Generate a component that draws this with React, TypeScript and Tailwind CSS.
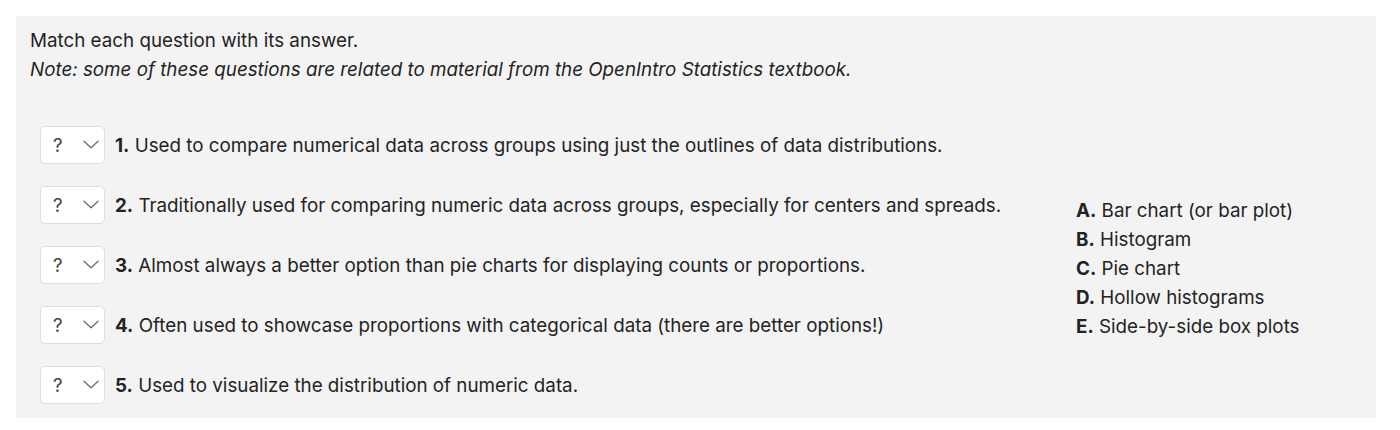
import React from "react";

const questions = [
  "Used to compare numerical data across groups using just the outlines of data distributions.",
  "Traditionally used for comparing numeric data across groups, especially for centers and spreads.",
  "Almost always a better option than pie charts for displaying counts or proportions.",
  "Often used to showcase proportions with categorical data (there are better options!)",
  "Used to visualize the distribution of numeric data.",
];

const answers = [
  ["A.", "Bar chart (or bar plot)"],
  ["B.", "Histogram"],
  ["C.", "Pie chart"],
  ["D.", "Hollow histograms"],
  ["E.", "Side-by-side box plots"],
];

function Select() {
  return (
    <div className="flex h-[38px] w-[65px] shrink-0 items-center justify-between rounded-[5px] border border-[#dedede] bg-white pl-[12px] pr-[5px] text-[#444]">
      <span>?</span>
      <svg width="16" height="9" viewBox="0 0 16 9" fill="none" className="mt-[-1px]">
        <path d="M1 1.2L8 7.8L15 1.2" stroke="#666" strokeWidth="1.2" strokeLinecap="round" strokeLinejoin="round" />
      </svg>
    </div>
  );
}

export default function App() {
  return (
    <div className="min-h-[430px] bg-white pl-4 pr-6 pt-4" style={{ fontFamily: "Inter, 'Noto Sans', sans-serif" }}>
      <div className="h-[402px] bg-[#f3f3f3] px-[14px] pt-[10px] text-[18.8px] text-[#232323]">
        <div className="leading-[29px]">Match each question with its answer.</div>
        <div className="italic leading-[29px]">
          Note: some of these questions are related to material from the OpenIntro Statistics textbook.
        </div>
        <div className="mt-[42px] flex items-center">
          <div className="flex w-[1046px] flex-none flex-col gap-[22px] pl-[10px]">
            {questions.map((q, i) => (
              <div key={i} className="flex items-center gap-[10px] leading-[29px]">
                <Select />
                <div>
                  <span className="font-bold">{i + 1}.</span> {q}
                </div>
              </div>
            ))}
          </div>
          <div className="mt-[6px] flex flex-col leading-[29px]">
            {answers.map(([l, t]) => (
              <div key={l}>
                <span className="font-bold">{l}</span> {t}
              </div>
            ))}
          </div>
        </div>
      </div>
    </div>
  );
}
